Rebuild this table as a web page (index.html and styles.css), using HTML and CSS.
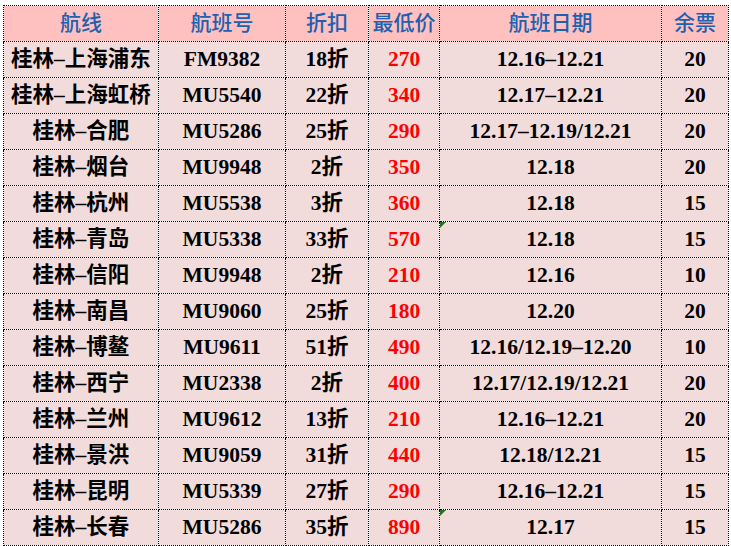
FILE: index.html
```html
<!DOCTYPE html>
<html lang="zh">
<head>
<meta charset="utf-8">
<link rel="stylesheet" href="styles.css">
</head>
<body>
<table class="grid">
<colgroup>
<col class="c1"><col class="c2"><col class="c3"><col class="c4"><col class="c5"><col class="c6">
</colgroup>
<thead>
<tr><th>航线</th><th>航班号</th><th>折扣</th><th>最低价</th><th>航班日期</th><th>余票</th></tr>
</thead>
<tbody>
<tr><td>桂林–上海浦东</td><td>FM9382</td><td>18折</td><td class="price">270</td><td>12.16–12.21</td><td>20</td></tr>
<tr><td>桂林–上海虹桥</td><td>MU5540</td><td>22折</td><td class="price">340</td><td>12.17–12.21</td><td>20</td></tr>
<tr><td>桂林–合肥</td><td>MU5286</td><td>25折</td><td class="price">290</td><td>12.17–12.19/12.21</td><td>20</td></tr>
<tr><td>桂林–烟台</td><td>MU9948</td><td>2折</td><td class="price">350</td><td>12.18</td><td>20</td></tr>
<tr><td>桂林–杭州</td><td>MU5538</td><td>3折</td><td class="price">360</td><td>12.18</td><td>15</td></tr>
<tr><td>桂林–青岛</td><td>MU5338</td><td>33折</td><td class="price">570</td><td class="flag">12.18</td><td>15</td></tr>
<tr><td>桂林–信阳</td><td>MU9948</td><td>2折</td><td class="price">210</td><td>12.16</td><td>10</td></tr>
<tr><td>桂林–南昌</td><td>MU9060</td><td>25折</td><td class="price">180</td><td>12.20</td><td>20</td></tr>
<tr><td>桂林–博鳌</td><td>MU9611</td><td>51折</td><td class="price">490</td><td>12.16/12.19–12.20</td><td>10</td></tr>
<tr><td>桂林–西宁</td><td>MU2338</td><td>2折</td><td class="price">400</td><td>12.17/12.19/12.21</td><td>20</td></tr>
<tr><td>桂林–兰州</td><td>MU9612</td><td>13折</td><td class="price">210</td><td>12.16–12.21</td><td>20</td></tr>
<tr><td>桂林–景洪</td><td>MU9059</td><td>31折</td><td class="price">440</td><td>12.18/12.21</td><td>15</td></tr>
<tr><td>桂林–昆明</td><td>MU5339</td><td>27折</td><td class="price">290</td><td>12.16–12.21</td><td>15</td></tr>
<tr><td>桂林–长春</td><td>MU5286</td><td>35折</td><td class="price">890</td><td class="flag">12.17</td><td>15</td></tr>
</tbody>
</table>
</body>
</html>
```

FILE: styles.css
```css
html, body {
  margin: 0;
  padding: 0;
  background: #ffffff;
}
body {
  padding: 5px 0 0 3px;
}
.grid {
  border-collapse: collapse;
  table-layout: fixed;
  width: 726px;
  font-family: "Liberation Serif", "Noto Sans CJK SC", serif;
  font-size: 21.5px;
}
.c1 { width: 155px; }
.c2 { width: 127px; }
.c3 { width: 83px; }
.c4 { width: 71px; }
.c5 { width: 222px; }
.c6 { width: 67px; }
.grid th, .grid td {
  border: 1px dotted #000000;
  height: 35px;
  padding: 0;
  text-align: center;
  vertical-align: middle;
  white-space: nowrap;
  overflow: hidden;
  line-height: 1;
}
.grid th {
  background: #ffc0c0;
  color: #2060b0;
  font-weight: 500;
  font-size: 21px;
}
.grid td {
  background: #f2dcdb;
  color: #000000;
  font-weight: bold;
}
.grid td.price {
  color: #ff0000;
}
.grid td.flag {
  position: relative;
}
.grid td.flag::before {
  content: "";
  position: absolute;
  left: 0;
  top: 0;
  width: 0;
  height: 0;
  border-top: 6px solid #1a7a1a;
  border-right: 6px solid transparent;
}
```
